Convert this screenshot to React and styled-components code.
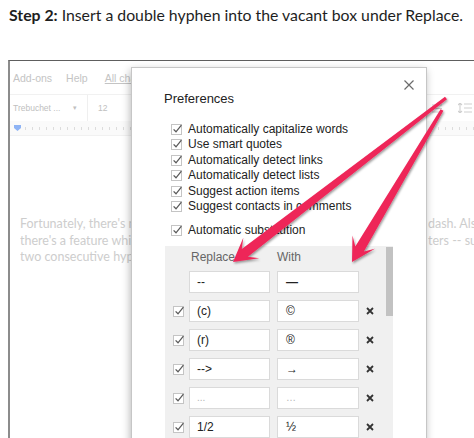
import React from 'react'
import styled, { createGlobalStyle } from "styled-components";

const GlobalStyle = createGlobalStyle`
  html, body {
    margin: 0;
    padding: 0;
    background: #fff;
  }
`;

const options = [
  "Automatically capitalize words",
  "Use smart quotes",
  "Automatically detect links",
  "Automatically detect lists",
  "Suggest action items",
  "Suggest contacts in comments",
];

const substitutions = [
  { from: "(c)", to: "©" },
  { from: "(r)", to: "®" },
  { from: "-->", to: "→" },
  { from: "...", to: "…", faded: true },
  { from: "1/2", to: "½" },
];

const docLines = [
  { left: "Fortunately, there's no need to memorize a shortcut for the em", right: "dash. Also," },
  { left: "there's a feature which automatically replaces special characters", right: "ters -- such as" },
  { left: "two consecutive hyphens with the em dash.", right: "" },
];

const Check = () => (
  <CheckSvg width="12" height="12" viewBox="0 0 12 12">
    <rect x="0.5" y="1.5" width="10" height="10" fill="#fff" stroke="#c4c4c4" />
    <path d="M2.6 6.4 L5 8.8 L10.4 2.2" fill="none" stroke="#5a5a5a" strokeWidth="1.3" />
  </CheckSvg>
);

const Remove = () => (
  <svg width="8" height="8" viewBox="0 0 8 8">
    <path d="M1 1 L7 7 M7 1 L1 7" stroke="#333" strokeWidth="1.8" />
  </svg>
);

// skitch style arrow, swept-back head
const arrowPoints = (s, t, { start = 1.6, shaft = 5, head = 23, join = 15, half = 13 } = {}) => {
  const dx = t[0] - s[0];
  const dy = t[1] - s[1];
  const len = Math.hypot(dx, dy);
  const u = [dx / len, dy / len];
  const n = [u[1], -u[0]];
  const at = (base, along, side) => [
    base[0] + u[0] * along + n[0] * side,
    base[1] + u[1] * along + n[1] * side,
  ];
  const pts = [
    at(s, 0, start),
    at(t, -join, shaft),
    at(t, -head, half),
    t,
    at(t, -head, -half),
    at(t, -join, -shaft),
    at(s, 0, -start),
  ];
  return pts.map((p) => p.map((v) => v.toFixed(1)).join(",")).join(" ");
};

const App = () => {
  return (
    <Page>
      <GlobalStyle />
      <Heading>
        <b>Step 2:</b> Insert a double hyphen into the vacant box under Replace.
      </Heading>
      <Frame>
        <MenuBar>
          <span>Add-ons</span>
          <span>Help</span>
          <MenuLink>All changes saved in Drive</MenuLink>
        </MenuBar>
        <Toolbar>
          <FontName>Trebuchet ...</FontName>
          <Caret>▾</Caret>
          <ToolSep />
          <span>12</span>
          <ToolIcons>
            <svg width="10" height="9" viewBox="0 0 10 9">
              <path d="M0 1h10M0 4.5h10M0 8h10" stroke="#cfcfcf" strokeWidth="1.2" />
            </svg>
            <svg width="14" height="10" viewBox="0 0 14 10">
              <path d="M2 0v10M0 2l2-2 2 2M0 8l2 2 2-2M6 1h8M6 5h8M6 9h8" stroke="#cfcfcf" strokeWidth="1.1" fill="none" />
            </svg>
          </ToolIcons>
        </Toolbar>
        <Ruler>
          <RulerMark />
          <RulerTicks />
        </Ruler>
        <DocBody>
          {docLines.map((line, i) => (
            <DocLine key={i}>
              <span>{line.left}</span>
              <span>{line.right}</span>
            </DocLine>
          ))}
        </DocBody>

        <Dialog>
          <Close width="10" height="10" viewBox="0 0 10 10">
            <path d="M0.5 0.5 L9.5 9.5 M9.5 0.5 L0.5 9.5" stroke="#6b6b6b" strokeWidth="1.2" />
          </Close>
          <Title>Preferences</Title>
          <OptionList>
            {options.map((o) => (
              <Option key={o}>
                <Check />
                {o}
              </Option>
            ))}
          </OptionList>
          <Option $spaced>
            <Check />
            Automatic substitution
          </Option>
          <Panel>
            <Table>
              <span />
              <HeadCell $pad={2}>Replace</HeadCell>
              <HeadCell>With</HeadCell>
              <span />

              <span />
              <Field>--</Field>
              <Field $to $strong>—</Field>
              <span />

              {substitutions.map((s) => (
                <React.Fragment key={s.from}>
                  <Check />
                  <Field $faded={s.faded}>{s.from}</Field>
                  <Field $to $faded={s.faded}>{s.to}</Field>
                  <RemoveCell>
                    <Remove />
                  </RemoveCell>
                </React.Fragment>
              ))}
            </Table>
            <ScrollTrack>
              <ScrollThumb />
            </ScrollTrack>
          </Panel>
        </Dialog>
      </Frame>

      <Arrows width="474" height="438" viewBox="0 0 474 438">
        <defs>
          <filter id="arrowShadow" x="-10%" y="-10%" width="130%" height="130%">
            <feDropShadow dx="1" dy="1.5" stdDeviation="1.2" floodColor="#000" floodOpacity="0.4" />
          </filter>
        </defs>
        <g fill="#ee2659" filter="url(#arrowShadow)">
          <polygon points={arrowPoints([446, 98], [233, 262])} />
          <polygon points={arrowPoints([442, 110], [352, 262])} />
        </g>
      </Arrows>
    </Page>
  )
}

export default App

const Page = styled.div`
  position: relative;
  width: 474px;
  height: 438px;
  overflow: hidden;
  background: #fff;
`;

const Heading = styled.div`
  box-sizing: border-box;
  height: 60px;
  padding: 5px 0 0 9px;
  font-family: "Lato", "Noto Sans", sans-serif;
  font-size: 15.8px;
  line-height: 20px;
  color: #1e1e1e;
  white-space: nowrap;
  b {
    font-weight: 700;
  }
`;

const Frame = styled.div`
  position: relative;
  box-sizing: border-box;
  margin-left: 8px;
  height: 378px;
  border-left: 2px solid #8c8c8c;
  border-top: 1px solid #5e5e5e;
  overflow: hidden;
  background: #fff;
`;

const MenuBar = styled.div`
  display: flex;
  align-items: center;
  gap: 14px;
  height: 33px;
  padding-left: 3px;
  border-bottom: 1px solid #f1f1f1;
  font-family: "Liberation Sans", Arial, sans-serif;
  font-size: 10.5px;
  color: #c4c4c4;
  white-space: nowrap;
`;

const MenuLink = styled.span`
  margin-left: 3px;
  text-decoration: underline;
`;

const Toolbar = styled.div`
  display: flex;
  align-items: center;
  height: 26px;
  padding-left: 3px;
  font-family: "Liberation Sans", Arial, sans-serif;
  font-size: 8.5px;
  color: #c0c0c0;
  white-space: nowrap;
`;

const FontName = styled.span`
  width: 60px;
`;

const Caret = styled.span`
  width: 14px;
  font-size: 7px;
`;

const ToolSep = styled.span`
  align-self: stretch;
  width: 1px;
  margin-right: 10px;
  background: #efefef;
`;

const ToolIcons = styled.span`
  display: flex;
  align-items: center;
  gap: 16px;
  margin-left: auto;
  padding-right: 2px;
`;

const Ruler = styled.div`
  display: flex;
  align-items: center;
  gap: 4px;
  height: 14px;
  padding-left: 4px;
  background: #fafafa;
  border-bottom: 1px solid #f1f1f1;
`;

const RulerMark = styled.span`
  width: 7px;
  height: 6px;
  background: #8fb4f5;
  clip-path: polygon(0 0, 100% 0, 100% 50%, 50% 100%, 0 50%);
`;

const RulerTicks = styled.span`
  flex: 1;
  height: 3px;
  background: repeating-linear-gradient(90deg, #dcdcdc 0 1px, transparent 1px 7px);
`;

const DocBody = styled.div`
  padding: 80px 0 0 10px;
  font-family: "Lato", "DejaVu Sans", sans-serif;
  font-size: 12.5px;
  line-height: 16.5px;
  color: #cdcdcd;
`;

const DocLine = styled.div`
  display: grid;
  grid-template-columns: 408px 1fr;
  white-space: nowrap;
  span {
    overflow: hidden;
  }
`;

const Dialog = styled.div`
  position: absolute;
  left: 121px;
  top: 6px;
  box-sizing: border-box;
  width: 296px;
  height: 390px;
  padding: 22px 0 0 32px;
  display: flex;
  flex-direction: column;
  background: #fff;
  border: 1px solid #c6c6c6;
  box-shadow: -1px 3px 8px rgba(0, 0, 0, 0.28);
  font-family: "Liberation Sans Narrow", "Liberation Sans", Arial, sans-serif;
  color: #222;
`;

const Close = styled.svg`
  position: absolute;
  top: 12px;
  right: 12px;
`;

const Title = styled.div`
  font-family: "Liberation Sans", Arial, sans-serif;
  font-size: 13px;
  line-height: 18px;
  color: #222;
`;

const OptionList = styled.div`
  display: flex;
  flex-direction: column;
  margin-top: 13px;
`;

const Option = styled.div`
  display: flex;
  align-items: center;
  gap: 5px;
  height: 15.5px;
  padding-left: 7px;
  margin-top: ${(p) => (p.$spaced ? "8px" : "0")};
  font-size: 12px;
  white-space: nowrap;
`;

const CheckSvg = styled.svg`
  display: block;
  flex: none;
`;

const Panel = styled.div`
  display: flex;
  width: 228px;
  margin: 8px 0 0 1px;
  flex: 1;
  background: #f0f0f0;
`;

const Table = styled.div`
  flex: 1;
  display: grid;
  grid-template-columns: 9px 81px 82px 8px;
  grid-auto-rows: 22px;
  grid-template-rows: 14px;
  column-gap: 7px;
  row-gap: 7px;
  align-items: center;
  align-content: start;
  padding: 4px 0 0 8px;
  font-family: "Liberation Sans", Arial, sans-serif;
  font-size: 12px;
  & > :nth-child(5) {
    margin-top: -3px;
  }
`;

const HeadCell = styled.span`
  padding-left: ${(p) => p.$pad || 0}px;
  line-height: 14px;
  color: #666;
`;

const Field = styled.div`
  box-sizing: border-box;
  height: 22px;
  display: flex;
  align-items: center;
  padding-left: ${(p) => (p.$to ? 8 : 7)}px;
  background: #fff;
  border: 1px solid #dadada;
  color: ${(p) => (p.$faded ? "#b5b5b5" : "#222")};
  font-size: ${(p) => (p.$faded ? "10px" : "12px")};
  font-weight: ${(p) => (p.$strong ? 700 : 400)};
`;

const RemoveCell = styled.span`
  display: flex;
  justify-content: center;
`;

const ScrollTrack = styled.div`
  width: 7px;
  padding-top: 1px;
`;

const ScrollThumb = styled.div`
  height: 69px;
  background: #c2c2c2;
`;

const Arrows = styled.svg`
  position: absolute;
  top: 0;
  left: 0;
  pointer-events: none;
`;
